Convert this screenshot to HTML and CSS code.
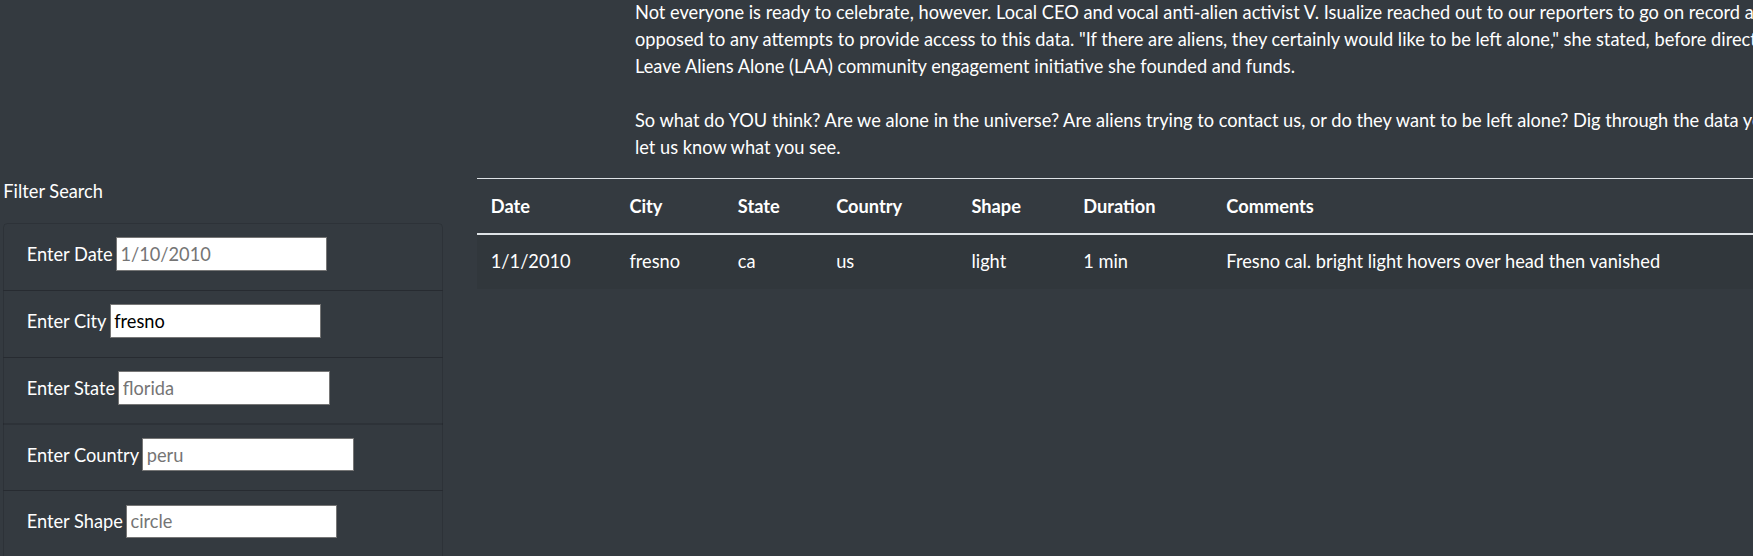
FILE: index.html
```html
<!DOCTYPE html>
<html lang="en">
<head>
<meta charset="utf-8">
<title>UFO Sightings</title>
<link rel="stylesheet" href="styles.css">
</head>
<body>
<div class="page">
  <p class="story">Not everyone is ready to celebrate, however. Local CEO and vocal anti-alien activist V. Isualize reached out to our reporters to go on record as being strongly<br>opposed to any attempts to provide access to this data. "If there are aliens, they certainly would like to be left alone," she stated, before directing our reporters to the<br>Leave Aliens Alone (LAA) community engagement initiative she founded and funds.<br><br>So what do YOU think? Are we alone in the universe? Are aliens trying to contact us, or do they want to be left alone? Dig through the data yourself and<br>let us know what you see.</p>
  <div class="main">
    <aside class="filters">
      <p class="filter-title">Filter Search</p>
      <ul class="filter-list">
        <li class="filter-item"><label class="filter-label" for="datetime">Enter Date</label><input class="filter-input" id="datetime" type="text" placeholder="1/10/2010"></li>
        <li class="filter-item"><label class="filter-label" for="city">Enter City</label><input class="filter-input" id="city" type="text" value="fresno"></li>
        <li class="filter-item"><label class="filter-label" for="state">Enter State</label><input class="filter-input" id="state" type="text" placeholder="florida"></li>
        <li class="filter-item"><label class="filter-label" for="country">Enter Country</label><input class="filter-input" id="country" type="text" placeholder="peru"></li>
        <li class="filter-item"><label class="filter-label" for="shape">Enter Shape</label><input class="filter-input" id="shape" type="text" placeholder="circle"></li>
      </ul>
    </aside>
    <section class="results">
      <table class="ufo-table">
        <colgroup>
          <col class="c-date"><col class="c-city"><col class="c-state"><col class="c-country"><col class="c-shape"><col class="c-duration"><col class="c-comments">
        </colgroup>
        <thead>
          <tr>
            <th>Date</th><th>City</th><th>State</th><th>Country</th><th>Shape</th><th>Duration</th><th>Comments</th>
          </tr>
        </thead>
        <tbody>
          <tr>
            <td>1/1/2010</td><td>fresno</td><td>ca</td><td>us</td><td>light</td><td>1 min</td><td>Fresno cal. bright light hovers over head then vanished</td>
          </tr>
        </tbody>
      </table>
    </section>
  </div>
</div>
</body>
</html>
```

FILE: styles.css
```css
html, body {
  margin: 0;
  padding: 0;
  overflow: hidden;
  background: #343a40;
}

.page {
  zoom: 1.118;
  width: 1568px;
  min-height: 500px;
  overflow: hidden;
  background: #343a40;
  color: #fff;
  font-family: "Lato", "Liberation Sans", sans-serif;
  font-size: 16.3px;
  line-height: 24px;
}

.story {
  margin: -0.5px 0 16px 568px;
  white-space: nowrap;
}

.main {
  display: flex;
  align-items: flex-start;
  gap: 31px;
}

.filters {
  flex: 0 0 393px;
  padding-left: 3px;
}

.filter-title {
  margin: 0 0 16px;
}

.filter-list {
  list-style: none;
  margin: 0;
  padding: 0;
  border-radius: 4px;
}

.filter-item {
  display: flex;
  align-items: baseline;
  gap: 3px;
  padding: 12px 20px 17px;
  margin-bottom: -1px;
  border: 1px solid rgba(0, 0, 0, 0.125);
}

.filter-item:first-child {
  border-top-left-radius: 4px;
  border-top-right-radius: 4px;
}

.filter-input {
  box-sizing: border-box;
  width: 189px;
  height: 30px;
  margin: 0;
  padding: 1px 3px;
  border: 1px solid #767676;
  background: #fff;
  color: #000;
  font-family: "Lato", "Liberation Sans", sans-serif;
  font-size: 16.3px;
}

.filter-input::placeholder {
  color: #757575;
}

.results {
  flex: 0 0 auto;
}

.ufo-table {
  width: 1400px;
  table-layout: fixed;
  border-collapse: collapse;
  color: #fff;
}

.c-date { width: 124px; }
.c-city { width: 97px; }
.c-state { width: 88px; }
.c-country { width: 121px; }
.c-shape { width: 100px; }
.c-duration { width: 128px; }

.ufo-table th,
.ufo-table td {
  padding: 12px;
  text-align: left;
  vertical-align: top;
}

.ufo-table th {
  font-weight: 700;
  border-top: 1px solid #dee2e6;
  border-bottom: 2px solid #dee2e6;
}

.ufo-table tbody tr {
  background: rgba(0, 0, 0, 0.05);
}
```
